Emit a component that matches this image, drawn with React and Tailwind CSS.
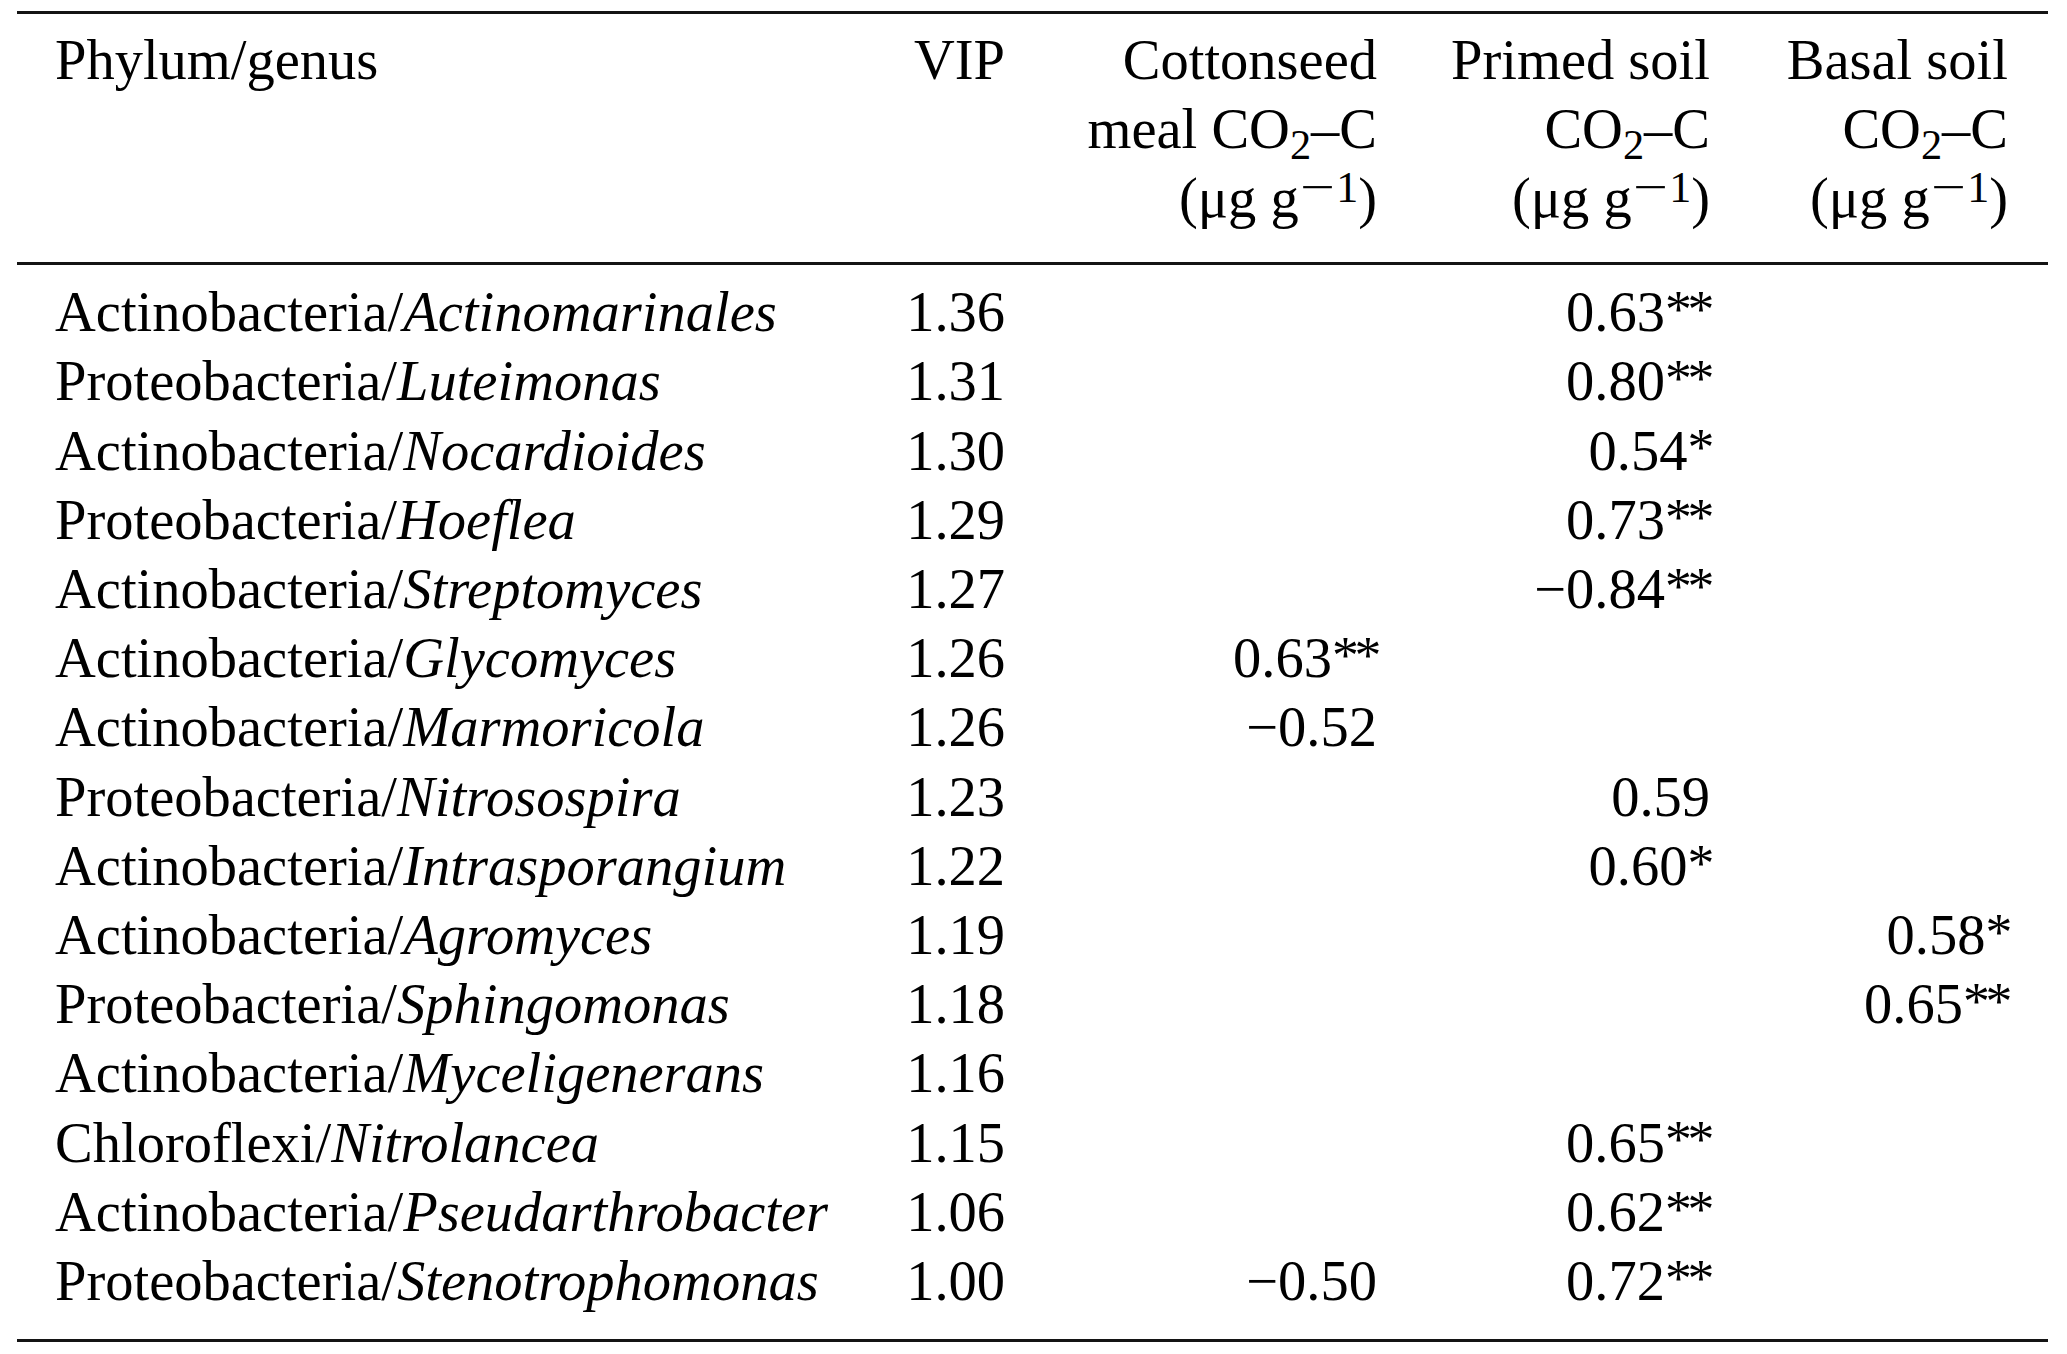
const rows = [
  ['Actinobacteria', 'Actinomarinales', '1.36', null, ['0.63', '**'], null],
  ['Proteobacteria', 'Luteimonas', '1.31', null, ['0.80', '**'], null],
  ['Actinobacteria', 'Nocardioides', '1.30', null, ['0.54', '*'], null],
  ['Proteobacteria', 'Hoeflea', '1.29', null, ['0.73', '**'], null],
  ['Actinobacteria', 'Streptomyces', '1.27', null, ['\u22120.84', '**'], null],
  ['Actinobacteria', 'Glycomyces', '1.26', ['0.63', '**'], null, null],
  ['Actinobacteria', 'Marmoricola', '1.26', ['\u22120.52', ''], null, null],
  ['Proteobacteria', 'Nitrosospira', '1.23', null, ['0.59', ''], null],
  ['Actinobacteria', 'Intrasporangium', '1.22', null, ['0.60', '*'], null],
  ['Actinobacteria', 'Agromyces', '1.19', null, null, ['0.58', '*']],
  ['Proteobacteria', 'Sphingomonas', '1.18', null, null, ['0.65', '**']],
  ['Actinobacteria', 'Myceligenerans', '1.16', null, null, null],
  ['Chloroflexi', 'Nitrolancea', '1.15', null, ['0.65', '**'], null],
  ['Actinobacteria', 'Pseudarthrobacter', '1.06', null, ['0.62', '**'], null],
  ['Proteobacteria', 'Stenotrophomonas', '1.00', ['\u22120.50', ''], ['0.72', '**'], null],
];

const Rule = () => <div className="h-[3px] bg-[#141414]" />;

const Value = ({ cell }) => {
  if (!cell) return <div />;
  const [num, stars] = cell;
  return (
    <div className="text-right whitespace-nowrap">
      {num}
      {stars && (
        <sup className="text-[0.95em] top-[-0.08em] tracking-[-0.08em]">{stars}</sup>
      )}
    </div>
  );
};

// (μg g^-1) with a long math minus
const Unit = () => (
  <>
    (μg g
    <sup className="text-[0.78em] top-[-0.35em]">
      <span className="inline-block w-[0.85em] text-center scale-x-[1.4]">{'\u2212'}</span>1
    </sup>
    )
  </>
);

const Header = ({ lines }) => (
  <div className="text-right whitespace-nowrap">
    {lines.map((line, i) => (
      <div key={i}>{line}</div>
    ))}
  </div>
);

const cols = 'grid grid-cols-[805px_145px_372px_333px_298px] pl-[38px]';

export default function App() {
  return (
    <div className="min-h-[1354px] bg-white pt-[11px] font-['Liberation_Serif','Times_New_Roman',serif] text-[56.5px] leading-[69.2px] text-black">
      <div className="ml-[17px] w-[2031px]">
        <Rule />
        <div className={`${cols} pt-[12px] pb-[28px]`}>
          <div>Phylum/genus</div>
          <div className="text-right">VIP</div>
          <Header
            lines={[
              'Cottonseed',
              <>meal CO<sub>2</sub>–C</>,
              <Unit />,
            ]}
          />
          <Header lines={['Primed soil', <>CO<sub>2</sub>–C</>, <Unit />]} />
          <Header lines={['Basal soil', <>CO<sub>2</sub>–C</>, <Unit />]} />
        </div>
        <Rule />
        <div className={`${cols} pt-[13.6px] pb-[23px]`}>
          {rows.map(([phylum, genus, vip, a, b, c]) => (
            <div key={genus} className="contents">
              <div className="whitespace-nowrap">
                {phylum}/<i>{genus}</i>
              </div>
              <div className="text-right">{vip}</div>
              <Value cell={a} />
              <Value cell={b} />
              <Value cell={c} />
            </div>
          ))}
        </div>
        <Rule />
      </div>
    </div>
  );
}
